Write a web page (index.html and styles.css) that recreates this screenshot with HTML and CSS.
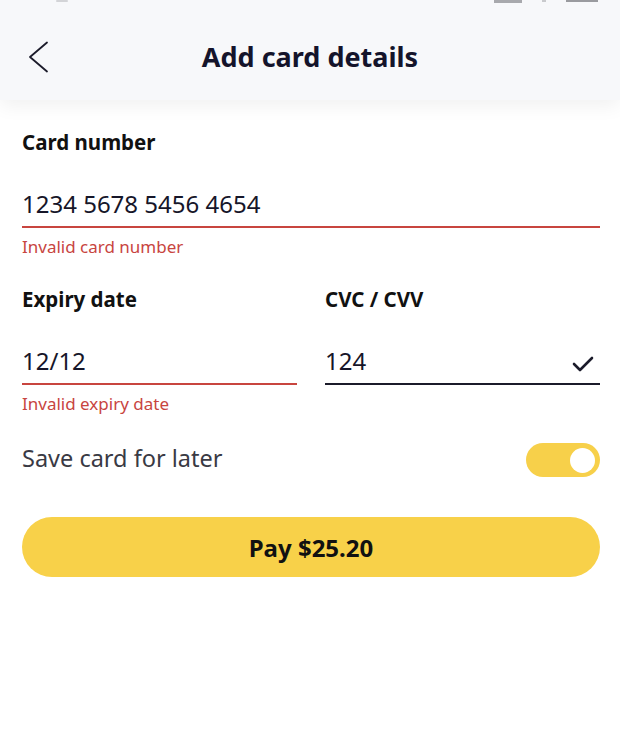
FILE: index.html
```html
<!DOCTYPE html>
<html lang="en">
<head>
<meta charset="utf-8">
<title>Add card details</title>
<link rel="stylesheet" href="styles.css">
</head>
<body>
<div class="screen">
  <header class="header">
    <div class="status">
      <span class="st-left"></span>
      <span class="st-right">
        <span class="st-bars"></span>
        <span class="st-dot"></span>
        <span class="st-batt"></span>
      </span>
    </div>
    <div class="bar">
      <button class="back" aria-label="Back">
        <svg width="22" height="32" viewBox="0 0 22 32"><path d="M20 1.5 L3 16 L20 30.5" fill="none" stroke="#1b1b2a" stroke-width="1.8" stroke-linecap="round" stroke-linejoin="round"/></svg>
      </button>
      <h1 class="title">Add card details</h1>
      <span class="spacer"></span>
    </div>
  </header>

  <main class="form">
    <div class="field">
      <div class="label">Card number</div>
      <div class="input error">1234 5678 5456 4654</div>
      <div class="msg">Invalid card number</div>
    </div>

    <div class="row2">
      <div class="field">
        <div class="label">Expiry date</div>
        <div class="input error">12/12</div>
        <div class="msg">Invalid expiry date</div>
      </div>
      <div class="field">
        <div class="label">CVC / CVV</div>
        <div class="input ok"><span>124</span>
          <svg class="check" width="22" height="16" viewBox="0 0 22 16"><path d="M2 8 L8 14 L20 2" fill="none" stroke="#1b1b2a" stroke-width="2.6" stroke-linecap="round" stroke-linejoin="round"/></svg>
        </div>
      </div>
    </div>

    <div class="save">
      <span class="save-text">Save card for later</span>
      <span class="toggle"><span class="knob"></span></span>
    </div>

    <button class="pay">Pay $25.20</button>
  </main>
</div>
</body>
</html>
```

FILE: styles.css
```css
* { box-sizing: border-box; }
html, body { margin: 0; padding: 0; background: #ffffff; }
body { font-family: "Noto Sans", "Open Sans", sans-serif; color: #161629; }

.screen { width: 620px; min-height: 734px; background: #fff; }

.header {
  height: 100px;
  background: #f7f8fa;
  box-shadow: 0 6px 18px rgba(0, 0, 0, 0.06);
  position: relative;
}
.status { height: 6px; display: flex; justify-content: space-between; padding: 0 22px 0 56px; }
.st-left { width: 12px; height: 2px; background: #d3d4d7; border-radius: 1px; }
.st-right { display: flex; gap: 20px; align-items: flex-start; }
.st-bars { width: 28px; height: 3px; background: #a8a9ad; }
.st-dot { width: 4px; height: 2px; background: #c9cacd; }
.st-batt { width: 32px; height: 2px; background: #9a9b9f; }

.bar {
  height: 94px;
  display: grid;
  grid-template-columns: 60px 1fr 60px;
  align-items: center;
  padding-top: 8px;
}
.back {
  border: 0; background: none; padding: 0 0 0 27px; margin: 0;
  display: flex; align-items: center; height: 32px; cursor: pointer;
}
.title {
  margin: 0;
  text-align: center;
  font-size: 27px;
  font-weight: 700;
  line-height: 32px;
  color: #14142b;
}

.form { padding: 30px 20px 0 22px; }

.field { display: flex; flex-direction: column; }
.label {
  font-size: 20.5px;
  font-weight: 700;
  line-height: 24px;
  color: #111;
}
.input {
  margin-top: 34px;
  font-size: 24px;
  line-height: 32px;
  padding-bottom: 6px;
  border-bottom: 2px solid #1b1b2a;
  color: #161629;
  display: flex;
  justify-content: space-between;
  align-items: center;
}
.input.error { border-bottom-color: #c8453f; }
.check { margin-right: 6px; margin-top: 5px; }
.msg {
  margin-top: 9px;
  font-size: 17px;
  line-height: 20px;
  color: #c8453f;
}

.row2 {
  margin-top: 30px;
  display: grid;
  grid-template-columns: 1fr 1fr;
  column-gap: 28px;
}

.save {
  margin-top: 29px;
  height: 34px;
  display: flex;
  justify-content: space-between;
  align-items: flex-start;
}
.save-text { font-size: 23.5px; line-height: 30px; color: #3a3a44; }
.toggle {
  width: 74px; height: 34px; border-radius: 17px;
  background: #f7d04a;
  display: flex; align-items: center; justify-content: flex-end;
  padding-right: 5px;
}
.knob { width: 25px; height: 25px; border-radius: 50%; background: #fff; }

.pay {
  margin-top: 40px;
  width: 100%;
  height: 60px;
  border: 0;
  border-radius: 30px;
  background: #f8d149;
  font-family: "Noto Sans", "Open Sans", sans-serif;
  font-size: 24px;
  font-weight: 700;
  color: #111;
  cursor: pointer;
}
```
